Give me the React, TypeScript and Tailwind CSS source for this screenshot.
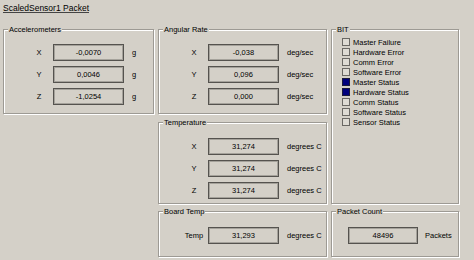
import type { ReactNode } from 'react';

// Windows-style etched group box
function Group({ title, className = '', children }: { title: string; className?: string; children?: ReactNode }) {
  return (
    <fieldset
      className={`border border-[#9d9a94] shadow-[inset_1px_1px_0_#ffffff,1px_1px_0_#ffffff] ${className}`}
    >
      <legend className="ml-[4px] px-[1px] leading-[9px] bg-[#d4d0c8]">{title}</legend>
      {children}
    </fieldset>
  );
}

function ValueBox({ value, width = 'w-[71px]' }: { value: string; width?: string }) {
  return (
    <div
      className={`${width} h-[17px] flex items-center justify-center border border-[#55534f] shadow-[inset_0_0_0_1px_#a5a29b] bg-[#d4d0c8]`}
    >
      {value}
    </div>
  );
}

function Row({ label, value, unit }: { label: string; value: string; unit: string }) {
  return (
    <div className="flex items-center h-[17px] pl-[21px]">
      <span className="w-[28px] text-center">{label}</span>
      <ValueBox value={value} />
      <span className="ml-[8px]">{unit}</span>
    </div>
  );
}

const bits: { name: string; on: boolean }[] = [
  { name: 'Master Failure', on: false },
  { name: 'Hardware Error', on: false },
  { name: 'Comm Error', on: false },
  { name: 'Software Error', on: false },
  { name: 'Master Status', on: true },
  { name: 'Hardware Status', on: true },
  { name: 'Comm Status', on: false },
  { name: 'Software Status', on: false },
  { name: 'Sensor Status', on: false },
];

export default function App() {
  return (
    <div className="w-[474px] h-[260px] bg-[#d4d0c8] text-black text-[7.5px] leading-[9px] font-['Liberation_Sans',Arial,sans-serif] flex flex-col overflow-hidden">
      {/* Title */}
      <div className="h-[25px] pt-[3px] pl-[3px]">
        <span className="text-[8.5px] leading-[10px] underline underline-offset-[1px] decoration-[#444]">
          ScaledSensor1 Packet
        </span>
      </div>

      <div className="flex pl-[3px] gap-[4px]">
        {/* Accelerometers */}
        <div className="w-[151px]">
          <Group title="Accelerometers" className="h-[89px] pt-[10px]">
            <div className="flex flex-col gap-[5px]">
              <Row label="X" value="-0,0070" unit="g" />
              <Row label="Y" value="0,0046" unit="g" />
              <Row label="Z" value="-1,0254" unit="g" />
            </div>
          </Group>
        </div>

        {/* Middle column */}
        <div className="w-[169px] flex flex-col">
          <Group title="Angular Rate" className="h-[89px] pt-[10px]">
            <div className="flex flex-col gap-[5px]">
              <Row label="X" value="-0,038" unit="deg/sec" />
              <Row label="Y" value="0,096" unit="deg/sec" />
              <Row label="Z" value="0,000" unit="deg/sec" />
            </div>
          </Group>
          <Group title="Temperature" className="mt-[4px] h-[86px] pt-[11px]">
            <div className="flex flex-col gap-[5px]">
              <Row label="X" value="31,274" unit="degrees C" />
              <Row label="Y" value="31,274" unit="degrees C" />
              <Row label="Z" value="31,274" unit="degrees C" />
            </div>
          </Group>
          <Group title="Board Temp" className="mt-[3px] h-[50px] pt-[11px]">
            <Row label="Temp" value="31,293" unit="degrees C" />
          </Group>
        </div>

        {/* Right column */}
        <div className="w-[128px] flex flex-col">
          <Group title="BIT" className="h-[179px] pt-[3px]">
            <div className="flex flex-col pl-[10px]">
              {bits.map((b) => (
                <div key={b.name} className="flex items-center h-[10px]">
                  <span
                    className={`w-[8px] h-[8px] border ${
                      b.on ? 'border-[#1b1b3a] bg-[#00007c]' : 'border-[#6a6864] bg-[#dedbd4]'
                    }`}
                  />
                  <span className="ml-[3px]">{b.name}</span>
                </div>
              ))}
            </div>
          </Group>
          <Group title="Packet Count" className="mt-[3px] h-[50px] pt-[11px]">
            <div className="flex items-center pl-[16px]">
              <ValueBox value="48496" width="w-[70px]" />
              <span className="ml-[7px]">Packets</span>
            </div>
          </Group>
        </div>
      </div>
    </div>
  );
}
